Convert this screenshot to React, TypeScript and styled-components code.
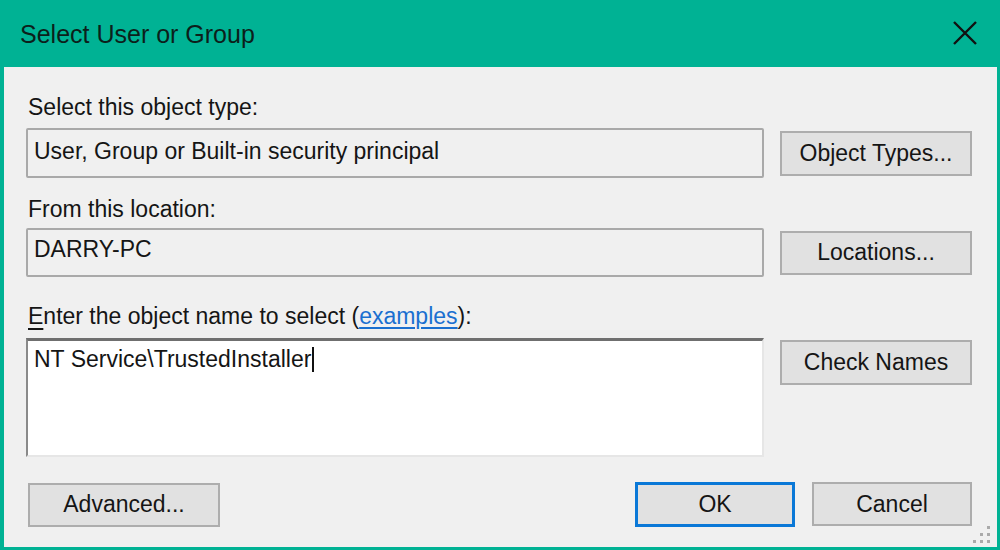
import React from "react";
import styled, { createGlobalStyle } from "styled-components";

const Global = createGlobalStyle`
  html, body { margin: 0; padding: 0; }
  body { width: 1000px; height: 550px; overflow: hidden; font-family: "Liberation Sans", Arial, sans-serif; }
  #root { width: 1000px; height: 550px; }
`;

const Window = styled.div`
  width: 1000px;
  height: 550px;
  box-sizing: border-box;
  background: #00b294;
  padding: 0 3px 3px 4px;
  display: flex;
  flex-direction: column;
`;

const TitleBar = styled.div`
  height: 67px;
  flex: none;
  display: flex;
  align-items: center;
  justify-content: space-between;
  padding: 0 19px 0 16px;
`;

const Title = styled.div`
  font-size: 25px;
  color: #0c1f1b;
  margin-top: 1px;
`;

const CloseButton = styled.div`
  width: 26px;
  height: 26px;
  display: flex;
  align-items: center;
  justify-content: center;
  margin-top: -1px;
`;

const Client = styled.div`
  flex: 1;
  position: relative;
  background: #f0f0f0;
  padding: 27px 25px 0 22px;
  display: flex;
  flex-direction: column;
`;

const Label = styled.div<{ $top?: number; $bottom: number }>`
  font-size: 23px;
  line-height: 26px;
  color: #151515;
  margin: ${(p) => p.$top ?? 0}px 0 ${(p) => p.$bottom}px 2px;
  white-space: nowrap;
`;

const Row = styled.div<{ $align?: string }>`
  display: grid;
  grid-template-columns: 738px 192px;
  column-gap: 16px;
  align-items: ${(p) => p.$align ?? "center"};
`;

const ReadOnlyField = styled.div<{ $h: number; $pt: number }>`
  box-sizing: border-box;
  height: ${(p) => p.$h}px;
  border: 2px solid #a9a9a9;
  border-radius: 2px;
  background: #f0f0f0;
  padding: ${(p) => p.$pt}px 8px 0 6px;
  font-size: 23px;
  line-height: 26px;
  color: #151515;
  white-space: nowrap;
`;

const TextArea = styled.div`
  box-sizing: border-box;
  height: 119px;
  background: #ffffff;
  border-top: 3px solid #6f6f6f;
  border-left: 2px solid #8a8a8a;
  border-right: 2px solid #e6e6e6;
  border-bottom: 2px solid #e6e6e6;
  padding: 5px 8px 0 6px;
  font-size: 23px;
  line-height: 26px;
  color: #151515;
  white-space: nowrap;
`;

const Caret = styled.span`
  display: inline-block;
  width: 0;
  height: 25px;
  border-left: 2px solid #111;
  vertical-align: -5px;
  margin-left: 1px;
`;

const Button = styled.div<{ $w?: number; $h: number; $default?: boolean; $mt?: number }>`
  box-sizing: border-box;
  width: ${(p) => (p.$w ? `${p.$w}px` : "auto")};
  height: ${(p) => p.$h}px;
  margin-top: ${(p) => p.$mt ?? 0}px;
  background: #e1e1e1;
  border: ${(p) => (p.$default ? "3px solid #0a78d7" : "2px solid #adadad")};
  display: flex;
  align-items: center;
  justify-content: center;
  font-size: 23px;
  color: #151515;
  white-space: nowrap;
`;

const BottomRow = styled.div`
  display: flex;
  align-items: center;
  margin-top: 25px;
  padding-left: 2px;
`;

const Spacer = styled.div`
  flex: 1;
`;

const RightButtons = styled.div`
  display: flex;
  gap: 17px;
`;

const Link = styled.span`
  color: #1a6fd0;
  text-decoration: underline;
  text-underline-offset: 3px;
`;

const AccessKey = styled.span`
  text-decoration: underline;
  text-underline-offset: 4px;
`;

const Grip = styled.svg`
  position: absolute;
  right: 6px;
  bottom: 3px;
`;

export default function App() {
  return (
    <>
      <Global />
      <Window>
        <TitleBar>
          <Title>Select User or Group</Title>
          <CloseButton>
            <svg width="26" height="26" viewBox="0 0 26 26">
              <path d="M2 2 L24 24 M24 2 L2 24" stroke="#111" strokeWidth="2.4" fill="none" />
            </svg>
          </CloseButton>
        </TitleBar>
        <Client>
          <Label $bottom={8}>Select this object type:</Label>
          <Row>
            <ReadOnlyField $h={50} $pt={8}>User, Group or Built-in security principal</ReadOnlyField>
            <Button $h={45}>Object Types...</Button>
          </Row>
          <Label $top={18} $bottom={6}>From this location:</Label>
          <Row>
            <ReadOnlyField $h={49} $pt={6}>DARRY-PC</ReadOnlyField>
            <Button $h={44}>Locations...</Button>
          </Row>
          <Label $top={26} $bottom={9}>
            <AccessKey>E</AccessKey>nter the object name to select (<Link>examples</Link>):
          </Label>
          <Row $align="start">
            <TextArea>
              NT Service\TrustedInstaller<Caret />
            </TextArea>
            <Button $h={45} $mt={2}>Check Names</Button>
          </Row>
          <BottomRow>
            <Button $w={192} $h={44}>Advanced...</Button>
            <Spacer />
            <RightButtons>
              <Button $w={160} $h={45} $default>OK</Button>
              <Button $w={160} $h={44}>Cancel</Button>
            </RightButtons>
          </BottomRow>
          <Grip width="20" height="20" viewBox="0 0 20 20">
            <g fill="#aaaaaa">
              <rect x="16" y="2" width="3" height="3" />
              <rect x="9" y="9" width="3" height="3" />
              <rect x="16" y="9" width="3" height="3" />
              <rect x="2" y="16" width="3" height="3" />
              <rect x="9" y="16" width="3" height="3" />
              <rect x="16" y="16" width="3" height="3" />
            </g>
          </Grip>
        </Client>
      </Window>
    </>
  );
}
